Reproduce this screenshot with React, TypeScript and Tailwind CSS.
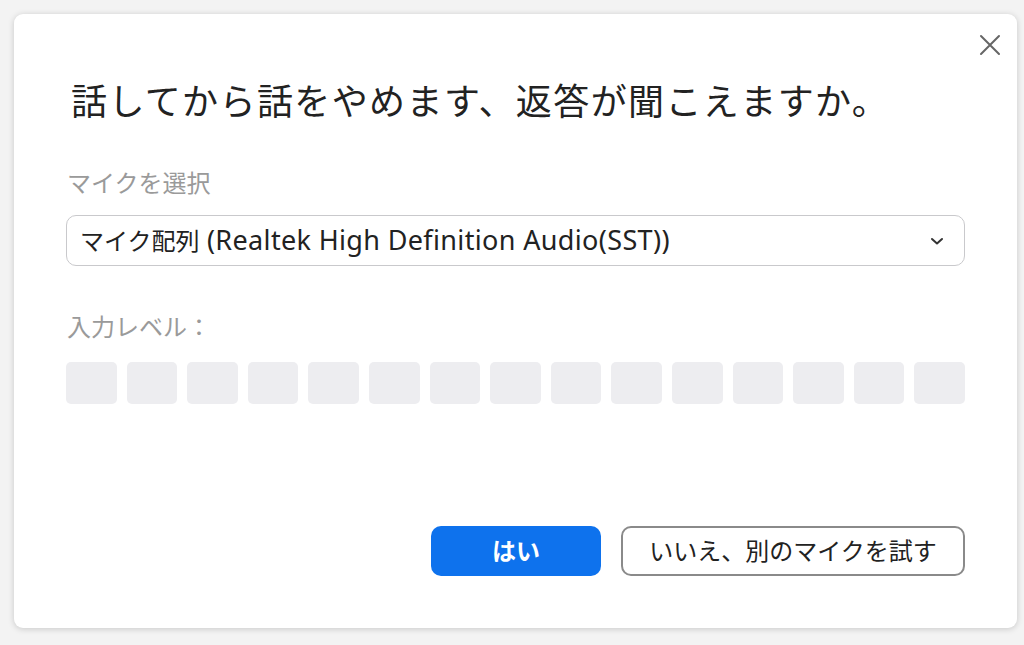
import React from "react";

const font = { fontFamily: '"Noto Sans", "Noto Sans CJK JP", sans-serif' };

const LevelBar = () => {
    const cells = Array.from({length: 15}, (_, i) => i);
    return <div className="flex gap-[10px] mt-[21px]">
        {cells.map((i) => <div key={i} className="flex-1 h-[42px] rounded-[5px] bg-[#ededf0]" />)}
    </div>
}

const App = () => {
    return <div className="w-[1024px] h-[645px] bg-[#f3f3f3] flex items-start pl-[14px] pt-[14px]" style={font}>
        <div className="relative w-[1003px] h-[614px] bg-white rounded-[9px] shadow-[0_1px_6px_rgba(0,0,0,0.18)] px-[52px] pt-[72px] flex flex-col">
            {/*close*/}
            <button className="absolute right-[14px] top-[18px] w-[26px] h-[26px] flex items-center justify-center">
                <svg width="22" height="22" viewBox="0 0 22 22" fill="none" stroke="#666" strokeWidth="2" strokeLinecap="round">
                    <path d="M2 2 L20 20 M20 2 L2 20" />
                </svg>
            </button>
            <h1 className="text-[36px] leading-[32px] text-[#222] pl-[5px] tracking-[1.4px]">話してから話をやめます、返答が聞こえますか。</h1>
            <label className="mt-[51px] text-[24px] leading-[28px] text-[#9a9a9a] pl-[1px]">マイクを選択</label>
            <div className="mt-[18px] h-[51px] border border-[#c9c9cc] rounded-[10px] flex items-center justify-between pl-[13px] pr-[20px]">
                <span className="text-[24px] text-[#222]">マイク配列<span className="text-[27px] tracking-[0.35px]"> (Realtek High Definition Audio(SST))</span></span>
                <svg width="14" height="10" viewBox="0 0 14 10" fill="none" stroke="#333" strokeWidth="2" strokeLinecap="round" strokeLinejoin="round">
                    <path d="M2 3 L7 7.5 L12 3" />
                </svg>
            </div>
            <label className="mt-[47px] text-[24px] leading-[28px] text-[#9a9a9a] pl-[1px]">入力レベル：</label>
            <LevelBar />
            <div className="flex justify-end gap-[20px] mt-[122px]">
                <button className="w-[170px] h-[50px] rounded-[10px] bg-[#0e72ed] text-white text-[24px] font-bold">はい</button>
                <button className="w-[344px] h-[50px] rounded-[10px] border-2 border-[#8a8a8a] text-[#222] text-[24px]">いいえ、別のマイクを試す</button>
            </div>
        </div>
    </div>
}

export default App;
